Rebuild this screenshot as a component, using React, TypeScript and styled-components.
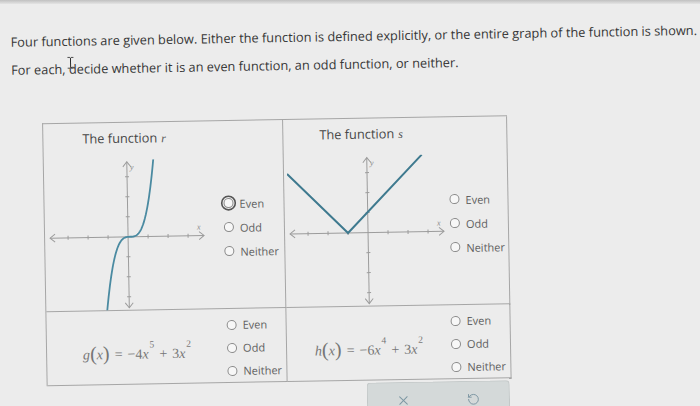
import React from "react";
import styled, { createGlobalStyle } from "styled-components";
import { X, RotateCcw } from "lucide-react";

const GlobalStyle = createGlobalStyle`
  html, body {
    margin: 0;
    padding: 0;
    background: #ececec;
  }
  body {
    font-family: "Open Sans", "DejaVu Sans", sans-serif;
    overflow: hidden;
  }
`;

const TopEdge = styled.div`
  height: 4px;
  background: linear-gradient(#c0c0c0, #e4e4e4);
`;

// the photo of the screen is tilted by about one degree
const Page = styled.div`
  position: relative;
  padding: 24px 0 0 10px;
  transform: rotate(-1deg);
  transform-origin: 0 0;
`;

const Prompt = styled.p`
  margin: 0;
  font-size: 12.8px;
  line-height: 28px;
  color: #363636;
  white-space: nowrap;
`;

const Cursor = styled.svg`
  position: absolute;
  left: 66px;
  top: 54px;
`;

const Table = styled.div`
  margin: 40px 0 0 30px;
  display: grid;
  grid-template-columns: 240px 224px;
  grid-template-rows: 188px 74px;
  width: max-content;
  border-top: 1px solid #a6a6a6;
  border-left: 1px solid #a6a6a6;
`;

const GraphCell = styled.div`
  border-right: 1px solid #a6a6a6;
  border-bottom: 1px solid #a6a6a6;
  display: grid;
  grid-template-columns: 158px auto;
  grid-template-rows: auto auto;
  padding: 6px 0 0 3px;
`;

const Title = styled.div<{ $indent: number }>`
  grid-column: 1;
  padding-left: ${(p) => p.$indent}px;
  font-size: 12.8px;
  line-height: 18px;
  color: #474747;
  white-space: nowrap;
`;

const FnName = styled.span`
  font-family: "Liberation Serif", serif;
  font-style: italic;
  font-size: 12px;
  margin-left: 4px;
  color: #555;
`;

const Plot = styled.svg`
  grid-column: 1;
  grid-row: 2;
  margin-top: 11px;
  display: block;
`;

const Choices = styled.div<{ $indent: number; $row: number }>`
  display: flex;
  flex-direction: column;
  align-self: center;
  margin-left: ${(p) => p.$indent}px;
  & > label {
    height: ${(p) => p.$row}px;
  }
`;

const GraphChoices = styled(Choices)`
  grid-column: 2;
  grid-row: 2;
`;

const Choice = styled.label`
  display: flex;
  align-items: center;
  gap: 6px;
  font-size: 11px;
  color: #606060;
  white-space: nowrap;
`;

const Radio = styled.span<{ $focus?: boolean }>`
  width: 10px;
  height: 10px;
  box-sizing: border-box;
  border-radius: 50%;
  border: 1px solid #8a8a8a;
  background: #f7f7f7;
  box-shadow: ${(p) =>
    p.$focus ? "0 0 0 1px #ececec, 0 0 0 2.6px #555" : "none"};
`;

const FormulaCell = styled.div`
  border-right: 1px solid #a6a6a6;
  border-bottom: 1px solid #a6a6a6;
  display: flex;
  align-items: center;
  padding-top: 4px;
`;

const Formula = styled.div<{ $width: number }>`
  width: ${(p) => p.$width}px;
  flex: none;
  text-align: center;
  font-family: "Liberation Serif", serif;
  font-size: 14px;
  color: #767676;
  white-space: nowrap;
  padding-top: 6px;
`;

const Var = styled.i`
  font-style: italic;
`;

const Paren = styled.span`
  font-size: 20px;
  vertical-align: -1px;
`;

const Sup = styled.sup`
  font-size: 9.5px;
  vertical-align: 11px;
  margin-left: 1px;
`;

const Op = styled.span`
  margin: 0 5px;
`;

const ActionBar = styled.div`
  margin: 2px 0 0 350px;
  width: 141px;
  height: 34px;
  display: flex;
  background: #d4d9d9;
  border: 1px solid #c3c8c8;
  border-bottom: 0;
  border-radius: 4px 4px 0 0;
`;

const ActionButton = styled.button`
  flex: 1;
  border: 0;
  padding: 0;
  background: transparent;
  display: flex;
  align-items: center;
  justify-content: center;
  color: #7d97a3;
`;

const W = 158;
const H = 150;
const OX = 80;
const OY = 77;
const AXIS = "#9c9c9c";
const CURVE = "#4a8aa1";

function Axes() {
  const ticks = [-60, -40, -20, 20, 40, 60];
  return (
    <g stroke={AXIS} strokeWidth={1} fill="none">
      <line x1={2} y1={OY} x2={W - 2} y2={OY} />
      <line x1={OX} y1={2} x2={OX} y2={H - 2} />
      <polyline points={`7,${OY - 4} 2,${OY} 7,${OY + 4}`} />
      <polyline points={`${W - 7},${OY - 4} ${W - 2},${OY} ${W - 7},${OY + 4}`} />
      <polyline points={`${OX - 4},7 ${OX},2 ${OX + 4},7`} />
      <polyline points={`${OX - 4},${H - 7} ${OX},${H - 2} ${OX + 4},${H - 7}`} />
      {ticks.map((t) => (
        <line key={"x" + t} x1={OX + t} y1={OY - 2} x2={OX + t} y2={OY + 2} />
      ))}
      {ticks.map((t) => (
        <line key={"y" + t} x1={OX - 2} y1={OY + t} x2={OX + 2} y2={OY + t} />
      ))}
      <text
        x={W - 9}
        y={OY - 6}
        fill="#888"
        stroke="none"
        fontSize={8}
        fontStyle="italic"
        fontFamily="Liberation Serif, serif"
      >
        x
      </text>
      <text
        x={OX + 3}
        y={10}
        fill="#888"
        stroke="none"
        fontSize={8}
        fontStyle="italic"
        fontFamily="Liberation Serif, serif"
      >
        y
      </text>
    </g>
  );
}

function cubicPath() {
  const pts: string[] = [];
  for (let X = -32; X <= 32; X += 0.5) {
    const u = (X - 2) / 20;
    const Y = 2.1 * u * u * u * 20;
    pts.push(`${(OX + X).toFixed(1)},${(OY - Y).toFixed(1)}`);
  }
  return "M" + pts.join(" L");
}

function GraphR() {
  return (
    <Plot width={W} height={H} viewBox={`0 0 ${W} ${H}`}>
      <Axes />
      <path d={cubicPath()} stroke={CURVE} strokeWidth={1.8} fill="none" />
    </Plot>
  );
}

function GraphS() {
  return (
    <Plot width={W} height={H} viewBox={`0 0 ${W} ${H}`}>
      <Axes />
      <polyline
        points={`${OX - 80},${OY - 60} ${OX - 20},${OY} ${OX + 55},${OY - 77}`}
        stroke="#3f7a8f"
        strokeWidth={2}
        fill="none"
      />
    </Plot>
  );
}

function ChoiceItems({ focusFirst }: { focusFirst?: boolean }) {
  return (
    <>
      <Choice>
        <Radio $focus={focusFirst} />
        Even
      </Choice>
      <Choice>
        <Radio />
        Odd
      </Choice>
      <Choice>
        <Radio />
        Neither
      </Choice>
    </>
  );
}

export default function App() {
  return (
    <>
      <GlobalStyle />
      <TopEdge />
      <Page>
        <Prompt>
          Four functions are given below. Either the function is defined explicitly, or the entire
          graph of the function is shown.
        </Prompt>
        <Prompt>For each, decide whether it is an even function, an odd function, or neither.</Prompt>
        <Cursor width="7" height="12" viewBox="0 0 7 12">
          <path d="M0.5 0.5h2.5M4 0.5h2.5M3.5 1v10M0.5 11.5h2.5M4 11.5h2.5" stroke="#2a2a2a" strokeWidth="1" fill="none" />
        </Cursor>

        <Table>
          <GraphCell>
            <Title $indent={36}>
              The function<FnName>r</FnName>
            </Title>
            <GraphR />
            <GraphChoices $indent={18} $row={24}>
              <ChoiceItems focusFirst />
            </GraphChoices>
          </GraphCell>
          <GraphCell>
            <Title $indent={33}>
              The function<FnName>s</FnName>
            </Title>
            <GraphS />
            <GraphChoices $indent={4} $row={24}>
              <ChoiceItems />
            </GraphChoices>
          </GraphCell>
          <FormulaCell>
            <Formula $width={180}>
              <Var>g</Var>
              <Paren>(</Paren>
              <Var>x</Var>
              <Paren>)</Paren>
              <Op>=</Op>−4<Var>x</Var>
              <Sup>5</Sup>
              <Op>+</Op>3<Var>x</Var>
              <Sup>2</Sup>
            </Formula>
            <Choices $indent={0} $row={23}>
              <ChoiceItems />
            </Choices>
          </FormulaCell>
          <FormulaCell>
            <Formula $width={164}>
              <Var>h</Var>
              <Paren>(</Paren>
              <Var>x</Var>
              <Paren>)</Paren>
              <Op>=</Op>−6<Var>x</Var>
              <Sup>4</Sup>
              <Op>+</Op>3<Var>x</Var>
              <Sup>2</Sup>
            </Formula>
            <Choices $indent={0} $row={23}>
              <ChoiceItems />
            </Choices>
          </FormulaCell>
        </Table>

        <ActionBar>
          <ActionButton>
            <X size={15} strokeWidth={1.6} />
          </ActionButton>
          <ActionButton>
            <RotateCcw size={13} strokeWidth={1.8} />
          </ActionButton>
        </ActionBar>
      </Page>
    </>
  );
}
